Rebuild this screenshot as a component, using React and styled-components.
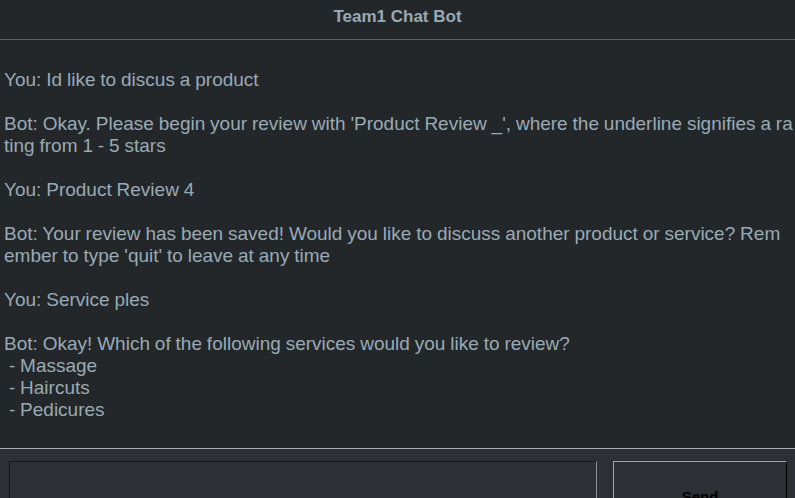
import styled, { createGlobalStyle } from "styled-components";

const GlobalStyle = createGlobalStyle`
  html, body {
    margin: 0;
    padding: 0;
    background: #23272a;
  }
  * {
    box-sizing: border-box;
  }
`;

const Page = styled.div`
  display: flex;
  flex-direction: column;
  height: 100vh;
  overflow: hidden;
  background: #23272a;
  font-family: "Liberation Sans", Arial, sans-serif;
  color: #99aab5;
`;

const Header = styled.div`
  height: 40px;
  display: flex;
  align-items: center;
  justify-content: center;
  border-bottom: 1px solid #5e6062;
  padding-bottom: 6px;
`;

const Title = styled.h1`
  margin: 0;
  font-size: 17px;
  font-weight: bold;
  color: #99aab5;
`;

const ChatLog = styled.div`
  flex: 1;
  padding: 29px 0 0 4px;
  overflow: hidden;
  border-bottom: 1px solid #a9abad;
`;

const Line = styled.div`
  white-space: pre;
  font-size: 19px;
  line-height: 22px;
  height: 22px;
  word-spacing: -0.4px;
`;

const Footer = styled.div`
  height: 49px;
  flex-shrink: 0;
  background: #2c2f33;
  display: flex;
  gap: 16px;
  padding: 12px 8px 0 9px;
  overflow: hidden;
`;

const InputField = styled.input`
  width: 588px;
  height: 70px;
  flex-shrink: 0;
  background: #2c2f33;
  color: #99aab5;
  border-top: 1px solid #17191b;
  border-left: 1px solid #17191b;
  border-right: 1px solid #8e9092;
  border-bottom: 1px solid #8e9092;
  outline: none;
  font-family: "Liberation Sans", Arial, sans-serif;
  font-size: 19px;
`;

const SendButton = styled.button`
  flex: 1;
  height: 70px;
  background: #2c2f33;
  border-top: 1px solid #a3a5a7;
  border-left: 1px solid #a3a5a7;
  border-right: 1px solid #000;
  border-bottom: 1px solid #000;
  color: #000;
  font-family: "Liberation Sans", Arial, sans-serif;
  font-weight: bold;
  font-size: 15px;
  padding: 0;
`;

const lines = [
  "You: Id like to discus a product",
  "",
  "Bot: Okay. Please begin your review with 'Product Review _', where the underline signifies a ra",
  "ting from 1 - 5 stars",
  "",
  "You: Product Review 4",
  "",
  "Bot: Your review has been saved! Would you like to discuss another product or service? Rem",
  "ember to type 'quit' to leave at any time",
  "",
  "You: Service ples",
  "",
  "Bot: Okay! Which of the following services would you like to review?",
  " - Massage",
  " - Haircuts",
  " - Pedicures",
];

export default function App() {
  return (
    <>
      <GlobalStyle />
      <Page>
        <Header>
          <Title>Team1 Chat Bot</Title>
        </Header>
        <ChatLog>
          {lines.map((text, i) => (
            <Line key={i}>{text}</Line>
          ))}
        </ChatLog>
        <Footer>
          <InputField type="text" />
          <SendButton>Send</SendButton>
        </Footer>
      </Page>
    </>
  );
}
